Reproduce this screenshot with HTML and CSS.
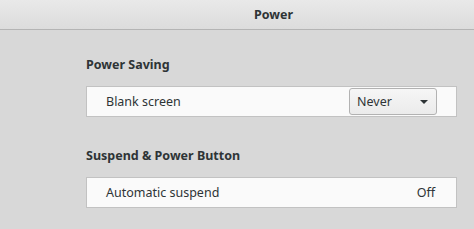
FILE: index.html
```html
<!DOCTYPE html>
<html lang="en">
<head>
    <meta charset="UTF-8">
    <title>Power</title>
    <link rel="stylesheet" href="styles.css">
</head>
<body>
    <!-- header bar -->
    <div class="headerbar">
        <span class="title">Power</span>
    </div>

    <div class="content">
        <h2 class="section-title">Power Saving</h2>
        <div class="frame">
            <div class="row">
                <span class="row-label">Blank screen</span>
                <button class="combo">
                    <span>Never</span>
                    <svg width="8" height="4" viewBox="0 0 8 4"><path d="M0 0h8L4 4z" fill="#2e3436"/></svg>
                </button>
            </div>
        </div>

        <h2 class="section-title">Suspend &amp; Power Button</h2>
        <div class="frame">
            <div class="row">
                <span class="row-label">Automatic suspend</span>
                <span class="row-value">Off</span>
            </div>
        </div>
    </div>
</body>
</html>
```

FILE: styles.css
```css
body {
    margin: 0;
    font-family: "Noto Sans", "DejaVu Sans", sans-serif;
    font-size: 12px;
    color: #2e3436;
    background-color: #d8d8d8;
    height: 229px;
    overflow: hidden;
}

.headerbar {
    height: 29px;
    background: linear-gradient(#e9e9e9, #dcdcdc);
    border-bottom: 1px solid #b4b4b4;
    display: flex;
    align-items: center;
    padding-left: 254px;
}

.title {
    font-weight: bold;
    font-size: 12.5px;
}

.content {
    display: flex;
    flex-direction: column;
    padding: 26px 17px 0 86px;
}

.section-title {
    margin: 0 0 12px 0;
    font-size: 12.5px;
    font-weight: bold;
    line-height: 18px;
}

.frame {
    background-color: #fafafa;
    border: 1px solid #c2c2c2;
    margin-bottom: 30px;
}

.row {
    height: 29px;
    display: flex;
    align-items: center;
    justify-content: space-between;
    padding: 0 21px 0 19px;
}

.row-label {
    font-size: 12.5px;
}

.row-value {
    font-size: 12.5px;
}

.combo {
    width: 88px;
    height: 27px;
    margin-right: -2px;
    display: flex;
    align-items: center;
    justify-content: space-between;
    padding: 0 8px 0 7px;
    border: 1px solid #b2b2b2;
    border-radius: 3px;
    background: linear-gradient(#f6f6f6, #ebebeb);
    font-family: inherit;
    font-size: 12.5px;
    color: #2e3436;
}

.combo svg {
    margin-right: 0;
}
```
